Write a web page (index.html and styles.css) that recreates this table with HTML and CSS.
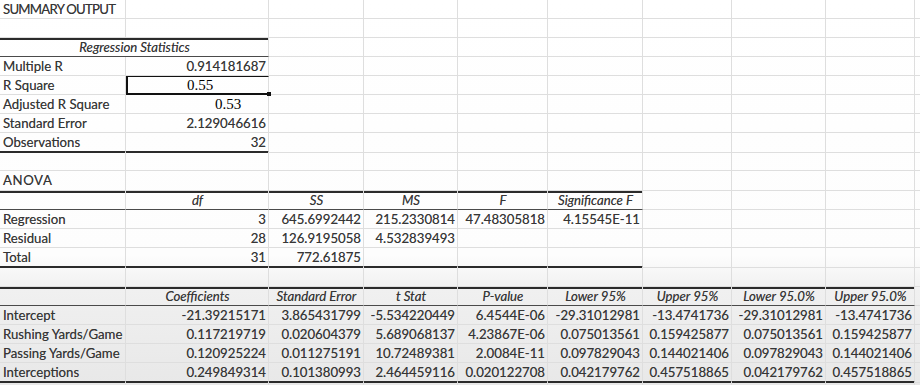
FILE: index.html
```html
<!DOCTYPE html>
<html lang="en">
<head>
<meta charset="utf-8">
<title>Summary Output</title>
<link rel="stylesheet" href="styles.css">
</head>
<body>
<div class="sheet">
  <div class="row">
    <div class="c caps">SUMMARY OUTPUT</div><div class="c"></div><div class="c"></div><div class="c"></div><div class="c"></div><div class="c"></div><div class="c"></div><div class="c"></div><div class="c"></div><div class="c last"></div>
  </div>
  <div class="row">
    <div class="c"></div><div class="c"></div><div class="c"></div><div class="c"></div><div class="c"></div><div class="c"></div><div class="c"></div><div class="c"></div><div class="c"></div><div class="c last"></div>
  </div>
  <div class="row">
    <div class="c h tt hb span2">Regression Statistics</div><div class="c"></div><div class="c"></div><div class="c"></div><div class="c"></div><div class="c"></div><div class="c"></div><div class="c"></div><div class="c last"></div>
  </div>
  <div class="row">
    <div class="c">Multiple R</div><div class="c n">0.914181687</div><div class="c"></div><div class="c"></div><div class="c"></div><div class="c"></div><div class="c"></div><div class="c"></div><div class="c"></div><div class="c last"></div>
  </div>
  <div class="row">
    <div class="c">R Square</div><div class="c sel">0.55</div><div class="c"></div><div class="c"></div><div class="c"></div><div class="c"></div><div class="c"></div><div class="c"></div><div class="c"></div><div class="c last"></div>
  </div>
  <div class="row">
    <div class="c">Adjusted R Square</div><div class="c paste">0.53</div><div class="c"></div><div class="c"></div><div class="c"></div><div class="c"></div><div class="c"></div><div class="c"></div><div class="c"></div><div class="c last"></div>
  </div>
  <div class="row">
    <div class="c">Standard Error</div><div class="c n">2.129046616</div><div class="c"></div><div class="c"></div><div class="c"></div><div class="c"></div><div class="c"></div><div class="c"></div><div class="c"></div><div class="c last"></div>
  </div>
  <div class="row">
    <div class="c bb">Observations</div><div class="c n bb">32</div><div class="c"></div><div class="c"></div><div class="c"></div><div class="c"></div><div class="c"></div><div class="c"></div><div class="c"></div><div class="c last"></div>
  </div>
  <div class="row">
    <div class="c"></div><div class="c"></div><div class="c"></div><div class="c"></div><div class="c"></div><div class="c"></div><div class="c"></div><div class="c"></div><div class="c"></div><div class="c last"></div>
  </div>
  <div class="row tall">
    <div class="c wide">ANOVA</div><div class="c"></div><div class="c"></div><div class="c"></div><div class="c"></div><div class="c"></div><div class="c"></div><div class="c"></div><div class="c"></div><div class="c last"></div>
  </div>
  <div class="row">
    <div class="c tt hb"></div><div class="c h tt hb">df</div><div class="c h tt hb">SS</div><div class="c h tt hb">MS</div><div class="c h tt hb">F</div><div class="c h tt hb">Significance F</div><div class="c"></div><div class="c"></div><div class="c"></div><div class="c last"></div>
  </div>
  <div class="row">
    <div class="c">Regression</div><div class="c n">3</div><div class="c n">645.6992442</div><div class="c n">215.2330814</div><div class="c n">47.48305818</div><div class="c n">4.15545E-11</div><div class="c"></div><div class="c"></div><div class="c"></div><div class="c last"></div>
  </div>
  <div class="row">
    <div class="c">Residual</div><div class="c n">28</div><div class="c n">126.9195058</div><div class="c n">4.532839493</div><div class="c"></div><div class="c"></div><div class="c"></div><div class="c"></div><div class="c"></div><div class="c last"></div>
  </div>
  <div class="row">
    <div class="c bb">Total</div><div class="c n bb">31</div><div class="c n bb">772.61875</div><div class="c bb"></div><div class="c bb"></div><div class="c bb"></div><div class="c"></div><div class="c"></div><div class="c"></div><div class="c last"></div>
  </div>
  <div class="row tall">
    <div class="c"></div><div class="c"></div><div class="c"></div><div class="c"></div><div class="c"></div><div class="c"></div><div class="c"></div><div class="c"></div><div class="c"></div><div class="c last"></div>
  </div>
  <div class="row">
    <div class="c tt hb"></div><div class="c h tt hb">Coefficients</div><div class="c h tt hb">Standard Error</div><div class="c h tt hb">t Stat</div><div class="c h tt hb">P-value</div><div class="c h tt hb">Lower 95%</div><div class="c h tt hb">Upper 95%</div><div class="c h tt hb">Lower 95.0%</div><div class="c h tt hb">Upper 95.0%</div><div class="c last"></div>
  </div>
  <div class="row">
    <div class="c">Intercept</div><div class="c n">-21.39215171</div><div class="c n">3.865431799</div><div class="c n">-5.534220449</div><div class="c n">6.4544E-06</div><div class="c n">-29.31012981</div><div class="c n">-13.4741736</div><div class="c n">-29.31012981</div><div class="c n">-13.4741736</div><div class="c last"></div>
  </div>
  <div class="row">
    <div class="c">Rushing Yards/Game</div><div class="c n">0.117219719</div><div class="c n">0.020604379</div><div class="c n">5.689068137</div><div class="c n">4.23867E-06</div><div class="c n">0.075013561</div><div class="c n">0.159425877</div><div class="c n">0.075013561</div><div class="c n">0.159425877</div><div class="c last"></div>
  </div>
  <div class="row">
    <div class="c">Passing Yards/Game</div><div class="c n">0.120925224</div><div class="c n">0.011275191</div><div class="c n">10.72489381</div><div class="c n">2.0084E-11</div><div class="c n">0.097829043</div><div class="c n">0.144021406</div><div class="c n">0.097829043</div><div class="c n">0.144021406</div><div class="c last"></div>
  </div>
  <div class="row">
    <div class="c bb">Interceptions</div><div class="c n bb">0.249849314</div><div class="c n bb">0.101380993</div><div class="c n bb">2.464459116</div><div class="c n bb">0.020122708</div><div class="c n bb">0.042179762</div><div class="c n bb">0.457518865</div><div class="c n bb">0.042179762</div><div class="c n bb">0.457518865</div><div class="c last"></div>
  </div>
  <div class="row">
    <div class="c"></div><div class="c"></div><div class="c"></div><div class="c"></div><div class="c"></div><div class="c"></div><div class="c"></div><div class="c"></div><div class="c"></div><div class="c last"></div>
  </div>
</div>
</body>
</html>
```

FILE: styles.css
```css
* {
  box-sizing: border-box;
}

html,
body {
  margin: 0;
  padding: 0;
}

body {
  width: 920px;
  height: 385px;
  overflow: hidden;
  background: linear-gradient(to bottom, #ffffff 0, #fdfdfd 255px, #f0f0f0 290px, #e8e8e8 385px);
  font-family: Lato, "Open Sans", sans-serif;
  font-size: 13.2px;
  color: #363636;
  text-shadow: 0 0 0.5px rgba(40, 40, 40, 0.55);
}

.sheet {
  display: flex;
  flex-direction: column;
}

.row {
  display: grid;
  grid-template-columns: 126px 143px 95px 94px 90px 95px 89px 94px 89px 5px;
  height: 19px;
  flex: none;
}

.row.tall {
  height: 20px;
}

.c {
  border-right: 1px solid #dedede;
  border-bottom: 1px solid #dedede;
  padding: 0 2px 0 3px;
  line-height: 18px;
  white-space: nowrap;
  overflow: visible;
}

.c.last {
  border-right: none;
}

.caps {
  letter-spacing: -0.75px;
}

.wide {
  letter-spacing: 0.6px;
}

.span2 {
  grid-column: span 2;
}

.n {
  text-align: right;
}

.h {
  font-style: italic;
  text-align: center;
}

.tt {
  box-shadow: inset 0 2px 0 #2b2b2b;
}

.hb {
  border-bottom-color: #4a4a4a;
}

.bb {
  border-bottom: 2px solid #2b2b2b;
}

.sel {
  position: relative;
  border-left: 2px solid #111111;
  border-top: 1px solid #111111;
  border-bottom: 2px solid #111111;
  padding-left: 59px;
  font-family: "Liberation Serif", serif;
  font-size: 15px;
  line-height: 16px;
  color: #000000;
  text-shadow: none;
}

.sel::after {
  content: "";
  position: absolute;
  right: -3px;
  bottom: -3px;
  width: 4px;
  height: 4px;
  background: #111111;
}

.paste {
  padding-left: 89px;
  font-family: "Liberation Serif", serif;
  font-size: 15px;
  line-height: 18px;
  color: #000000;
  text-shadow: none;
}
```
